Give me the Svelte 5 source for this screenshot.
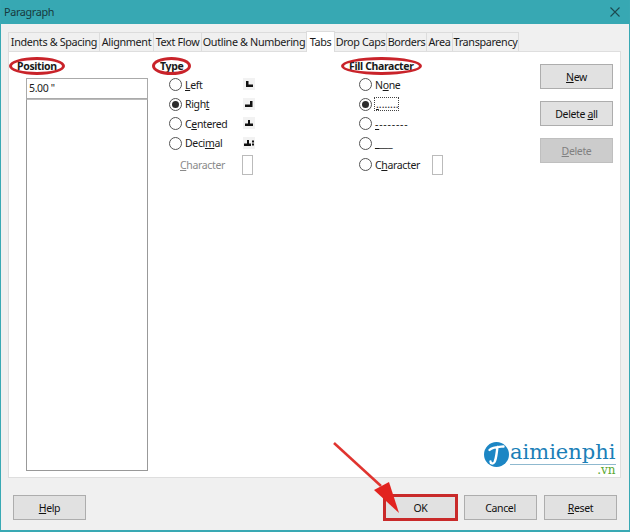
<script lang="ts">
  const tabs = [
    { label: "Indents & Spacing", w: 92 },
    { label: "Alignment", w: 55 },
    { label: "Text Flow", w: 49 },
    { label: "Outline & Numbering", w: 106 },
    { label: "Tabs", w: 29, active: true },
    { label: "Drop Caps", w: 53 },
    { label: "Borders", w: 41 },
    { label: "Area", w: 27 },
    { label: "Transparency", w: 67 },
  ];

  const tabStops: Record<string, string> = {
    left: "M3 1v6h7v-2.500h-4.500v-3.500z",
    right: "M7 1v3.500h-5v2.500h7.500v-6z",
    center: "M5 1h2v3.500h3v2.500h-8v-2.500h3z",
    decimal: "M4 1h2v3.500h2v2.500h-7v-2.500h3z M9 1.500h2v2h-2z M9 4.500h2v2h-2z",
  };
</script>

<div class="window">
  <header class="titlebar">
    <span>Paragraph</span>
    <svg class="close" width="10" height="10" viewBox="0 0 10 10" aria-hidden="true"><path d="M0.5 0.5l9 9M9.5 0.5l-9 9" stroke="#1d4a50" stroke-width="1.1" fill="none"/></svg>
  </header>

  <div class="body">
    <div class="tabbar">
      {#each tabs as t}
        <div class="tab" class:active={t.active} style="width: {t.w}px">{t.label}</div>
      {/each}
    </div>

    <section class="panel">
      <div class="col-position">
        <div class="heading ringed">Position</div>
        <div class="pos-input">5.00 "</div>
        <div class="pos-list"></div>
      </div>

      <div class="col-type">
        <div class="heading ringed">Type</div>
        <div class="radios">
          <div class="row"><i class="radio"></i><span class="lbl"><u>L</u>eft</span><svg class="stop" viewBox="0 0 12 8"><path d={tabStops.left}/></svg></div>
          <div class="row"><i class="radio on"></i><span class="lbl">Righ<u>t</u></span><svg class="stop" viewBox="0 0 12 8"><path d={tabStops.right}/></svg></div>
          <div class="row"><i class="radio"></i><span class="lbl">C<u>e</u>ntered</span><svg class="stop" viewBox="0 0 12 8"><path d={tabStops.center}/></svg></div>
          <div class="row"><i class="radio"></i><span class="lbl">Deci<u>m</u>al</span><svg class="stop" viewBox="0 0 12 8"><path d={tabStops.decimal}/></svg></div>
          <div class="row char-row"><span class="lbl muted"><u>C</u>haracter</span><i class="charbox"></i></div>
        </div>
      </div>

      <div class="col-fill">
        <div class="heading ringed">Fill Character</div>
        <div class="radios">
          <div class="row"><i class="radio"></i><span class="lbl">N<u>o</u>ne</span></div>
          <div class="row"><i class="radio on"></i><span class="lbl focus"><u>.</u>.......</span></div>
          <div class="row"><i class="radio"></i><span class="lbl dashes"><u>-</u>-------</span></div>
          <div class="row"><i class="radio"></i><span class="lbl"><u>_</u>___</span></div>
          <div class="row char-row"><i class="radio"></i><span class="lbl">C<u>h</u>aracter</span><i class="charbox"></i></div>
        </div>
      </div>

      <div class="col-actions">
        <button><u>N</u>ew</button>
        <button>Delete <u>a</u>ll</button>
        <button class="disabled"><u>D</u>elete</button>
      </div>

      <div class="logo">
        <svg width="28" height="28" viewBox="0 0 28 28" aria-hidden="true">
          <circle cx="13.5" cy="13.5" r="12.5" fill="#1c86c4"/>
          <path d="M6.500 9c3-3 8-3 14-3.500M14.500 6c-1 6-1 11-3 15-1.500 2.500-4 1.500-4-.5" stroke="#fff" stroke-width="2.400" fill="none" stroke-linecap="round"/>
        </svg>
        <div class="brand">
          <span class="brand-name">aimienphi</span>
          <span class="brand-tld">.vn</span>
        </div>
      </div>
    </section>

    <footer class="footer">
      <button><u>H</u>elp</button>
      <div class="spacer"></div>
      <button class="ok">OK</button>
      <button>Cancel</button>
      <button><u>R</u>eset</button>
    </footer>
  </div>

  <svg class="arrow" width="100" height="100" viewBox="0 0 100 100" aria-hidden="true">
    <path d="M2 2L49 45" stroke="#e0342f" stroke-width="2.500" fill="none"/>
    <path d="M67 72L42 49L57 41z" fill="#e2231f"/>
  </svg>
</div>

<style>
  :global(body) {
    margin: 0;
    background: #f0f0f0;
  }
  .window {
    position: relative;
    width: 630px;
    height: 532px;
    box-sizing: border-box;
    display: flex;
    flex-direction: column;
    border: 1px solid #39a9b4;
    border-top: 0;
    border-bottom-width: 2px;
    font-family: "Noto Sans", sans-serif;
    font-size: 11px;
    letter-spacing: -0.350px;
    color: #1a1a1a;
    overflow: hidden;
  }
  .titlebar {
    height: 23px;
    flex: none;
    background: #37a8b3;
    color: #17383d;
    font-size: 10.800px;
    display: flex;
    align-items: center;
    justify-content: space-between;
    padding: 0 9px 1px 3px;
  }
  .body {
    flex: 1;
    display: flex;
    flex-direction: column;
    background: #f0f0f0;
    padding: 0 8px 0 7px;
  }
  .tabbar {
    display: flex;
    height: 20px;
    margin-top: 7px;
    align-items: flex-end;
  }
  .tab {
    height: 19px;
    box-sizing: border-box;
    background: #f0f0f0;
    border: 1px solid #dcdcdc;
    border-bottom: 0;
    margin-right: -1px;
    text-align: center;
    line-height: 18px;
    white-space: nowrap;
    flex: none;
    font-size: 10.800px;
  }
  .tab.active {
    height: 21px;
    background: #fff;
    line-height: 20px;
    position: relative;
    z-index: 1;
    margin-bottom: -1px;
  }
  .panel {
    position: relative;
    height: 427px;
    flex: none;
    background: #fff;
    border: 1px solid #dedede;
    box-sizing: border-box;
    display: grid;
    grid-template-columns: 146px 188px 197px 73px;
    padding-top: 7px;
  }
  .heading {
    font-weight: 700;
    font-size: 10.500px;
    line-height: 14px;
    height: 14px;
    position: relative;
    width: max-content;
  }
  .ringed::after {
    content: "";
    position: absolute;
    inset: -2px -8px -2px -8px;
    border: 3px solid #c9232a;
    border-radius: 50%;
  }
  .col-position {
    padding-left: 8px;
  }
  .pos-input {
    margin: 5px 0 0 9px;
    width: 122px;
    height: 21px;
    box-sizing: border-box;
    border: 1px solid #aaa;
    padding-left: 2px;
    line-height: 19px;
    font-size: 10.500px;
  }
  .pos-list {
    margin-left: 9px;
    width: 122px;
    height: 372px;
    box-sizing: border-box;
    border: 1px solid #999;
    border-top: 1px solid #bbb;
  }
  .col-type .heading { margin-left: 5px; }
  .radios {
    margin-top: 2px;
    display: flex;
    flex-direction: column;
  }
  .col-type .radios { padding-left: 14px; }
  .col-fill .radios { padding-left: 16px; }
  .col-fill .heading { margin-left: 6px; }
  .row {
    display: flex;
    align-items: center;
    height: 19.500px;
    position: relative;
  }
  .radio {
    width: 11px;
    height: 11px;
    border: 1px solid #555;
    border-radius: 50%;
    background: #fff;
    flex: none;
    margin-right: 3px;
    position: relative;
  }
  .radio.on::after {
    content: "";
    position: absolute;
    inset: 2px;
    background: #2b2b2b;
    border-radius: 50%;
  }
  .lbl {
    font-size: 10.500px;
    white-space: nowrap;
  }
  .muted {
    color: #8a8a8a;
    margin-left: 11px;
  }
  .focus {
    outline: 1px dotted #444;
    line-height: 12px;
    padding: 0 1px;
    width: 21px;
    overflow: hidden;
    letter-spacing: 0;
  }
  .dashes {
    letter-spacing: 0.800px;
  }
  .stop {
    position: absolute;
    left: 74px;
    top: 3px;
    width: 12px;
    height: 12px;
    background: #f2f2f2;
    fill: #111;
  }
  .charbox {
    position: absolute;
    left: 73px;
    top: 0;
    width: 9px;
    height: 18px;
    border: 1px solid #bbb;
    background: #fff;
  }
  .char-row {
    margin-top: 2px;
  }
  .col-actions {
    display: flex;
    flex-direction: column;
    gap: 12px;
    padding-top: 5px;
  }
  button {
    width: 73px;
    height: 25px;
    padding: 0;
    box-sizing: border-box;
    background: #e1e1e1;
    border: 1px solid #adadad;
    font: inherit;
    font-size: 10.500px;
    letter-spacing: -0.350px;
    color: #111;
    flex: none;
  }
  button.disabled {
    background: #cccccc;
    border-color: #bfbfbf;
    color: #808080;
  }
  .logo {
    position: absolute;
    left: 474px;
    top: 389px;
    display: flex;
    align-items: flex-start;
  }
  .brand {
    display: flex;
    flex-direction: column;
    align-items: flex-end;
    margin: 0 0 0 -1px;
    letter-spacing: 0;
  }
  .brand-name {
    font-family: "DejaVu Serif", serif;
    font-size: 21px;
    line-height: 23px;
    color: #1b7fb8;
    border-bottom: 1px solid #8fb9cf;
  }
  .brand-tld {
    font-family: "DejaVu Serif", serif;
    font-size: 12px;
    line-height: 11px;
    color: #5aa832;
  }
  .footer {
    display: flex;
    align-items: center;
    gap: 7px;
    padding: 17px 4px 0 5px;
  }
  .spacer {
    flex: 1;
  }
  .footer button.ok {
    outline: 3px solid #c92a2a;
    outline-offset: -2px;
  }
  .arrow {
    position: absolute;
    left: 331px;
    top: 441px;
  }
</style>
